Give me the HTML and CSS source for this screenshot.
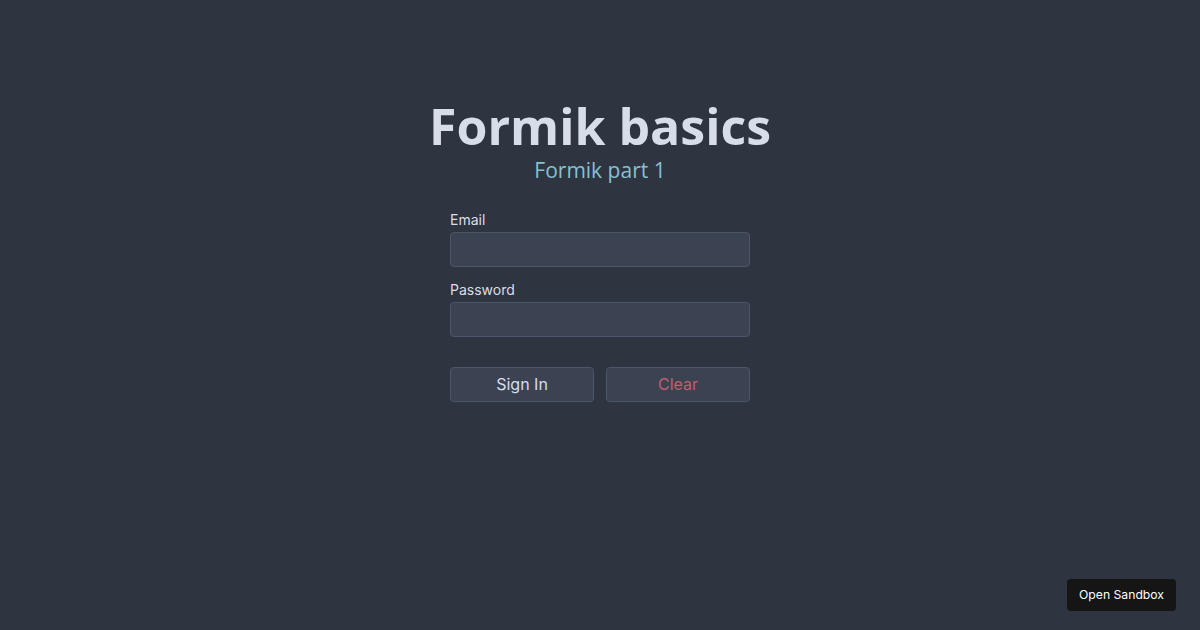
FILE: index.html
```html
<!DOCTYPE html>
<html lang="en">

<head>
    <meta charset="UTF-8">
    <meta name="viewport" content="width=device-width, initial-scale=1.0">
    <title>Formik basics</title>
    <link rel="stylesheet" href="styles.css">
</head>

<body>
    <div class="page">
        <h1 class="title">Formik basics</h1>
        <h2 class="subtitle">Formik part 1</h2>

        <form class="form">
            <label class="field">
                <span class="label">Email</span>
                <input type="email" class="input">
            </label>
            <label class="field">
                <span class="label">Password</span>
                <input type="password" class="input">
            </label>
            <div class="actions">
                <button type="submit" class="btn">Sign In</button>
                <button type="reset" class="btn btn-clear">Clear</button>
            </div>
        </form>
    </div>

    <a class="sandbox-btn" href="#">Open Sandbox</a>
</body>

</html>
```

FILE: styles.css
```css
body {
    margin: 0;
    background-color: #2e3440;
    color: #d8dee9;
    font-family: Inter, "Noto Sans", sans-serif;
}

.page {
    display: flex;
    flex-direction: column;
    align-items: center;
    padding-top: 96px;
}

.title {
    margin: 0;
    font-family: "Open Sans", sans-serif;
    font-size: 50px;
    font-weight: 700;
    line-height: 60px;
    color: #d8dee9;
}

.subtitle {
    margin: 2px 0 0;
    font-family: "Open Sans", sans-serif;
    font-size: 21px;
    font-weight: 400;
    line-height: 24px;
    color: #88c0d0;
}

.form {
    width: 300px;
    margin-top: 29px;
    display: flex;
    flex-direction: column;
}

.field {
    display: flex;
    flex-direction: column;
    margin-bottom: 14px;
}

.label {
    font-size: 14px;
    line-height: 18px;
    margin-bottom: 3px;
}

.input {
    box-sizing: border-box;
    height: 35px;
    width: 100%;
    background-color: #3b4252;
    border: 1px solid #4c566a;
    border-radius: 4px;
    color: #d8dee9;
}

.actions {
    display: grid;
    grid-template-columns: 1fr 1fr;
    gap: 12px;
    margin-top: 16px;
}

.btn {
    box-sizing: border-box;
    height: 35px;
    padding-bottom: 2px;
    background-color: #3b4252;
    border: 1px solid #4c566a;
    border-radius: 4px;
    color: #d8dee9;
    font-family: Inter, sans-serif;
    font-size: 16px;
    cursor: pointer;
}

.btn-clear {
    color: #bf616a;
}

.sandbox-btn {
    position: fixed;
    right: 24px;
    bottom: 19px;
    padding: 0 12px;
    height: 32px;
    line-height: 32px;
    background-color: #151515;
    border-radius: 4px;
    color: #ffffff;
    font-family: Inter, sans-serif;
    font-size: 12.2px;
    text-decoration: none;
}
```
